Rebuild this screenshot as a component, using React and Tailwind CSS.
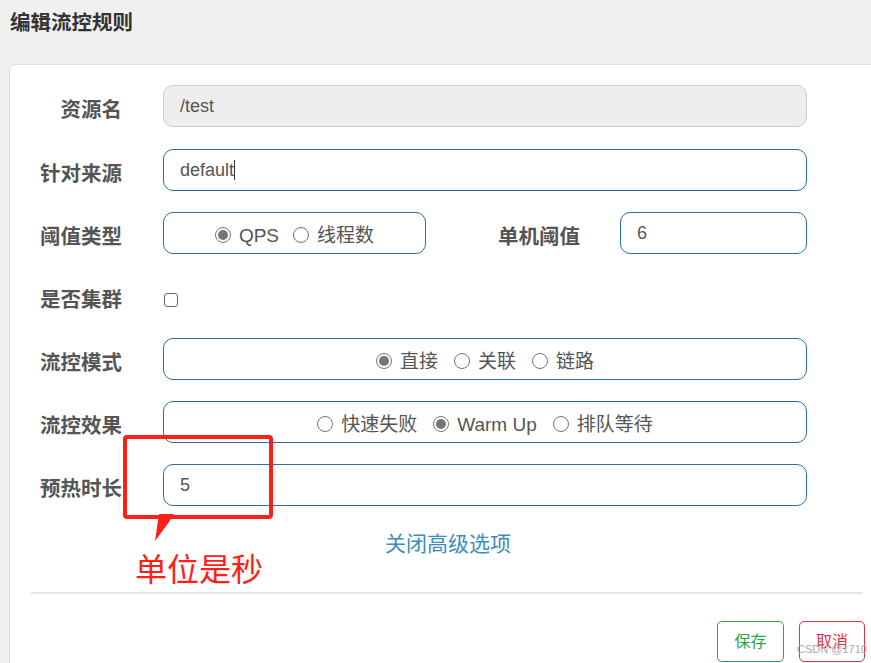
import React from 'react';

const font = { fontFamily: '"Liberation Sans", "Noto Sans CJK SC", sans-serif' };

const Radio = ({ checked, label }) => (
  <span className="flex items-center">
    <span className="w-[16px] h-[16px] rounded-full border-[1.5px] border-[#767676] flex items-center justify-center mr-[8px] mt-[3px]">
      {checked && <span className="w-[10px] h-[10px] rounded-full bg-[#767676]" />}
    </span>
    <span className="pt-[6px]">{label}</span>
  </span>
);

const Label = ({ children, className = 'w-[112px]' }) => (
  <div className={`${className} pt-[8px] text-right text-[20.5px] font-bold text-[#555] shrink-0`}>{children}</div>
);

const App = () => {
  return (
    <div className="relative w-[871px] h-[663px] overflow-hidden bg-[#f0f0f0]" style={font}>
      <div className="h-[64px] pl-[10px] pt-[8px] text-[20.5px] font-bold text-[#333]">编辑流控规则</div>

      <div className="ml-[9px] w-[900px] h-[620px] bg-white border border-[#ddd] rounded-tl-[6px]">
        <div className="pt-[20px]">
          <div className="flex items-center h-[42px] mb-[22px]">
            <Label>资源名</Label>
            <div className="ml-[41px] w-[644px] h-[42px] bg-[#eee] border border-[#ccc] rounded-[10px] flex items-center px-[16px] text-[18px] text-[#555]">
              /test
            </div>
          </div>

          <div className="flex items-center h-[42px] mb-[21px]">
            <Label>针对来源</Label>
            <div className="ml-[41px] w-[644px] h-[42px] border border-[#2e6da4] rounded-[10px] flex items-center px-[16px] text-[18px] text-[#555]">
              default<span className="w-px h-[20px] bg-[#333]" />
            </div>
          </div>

          <div className="flex items-center h-[42px] mb-[21px]">
            <Label>阈值类型</Label>
            <div className="ml-[41px] w-[263px] h-[42px] border border-[#2e6da4] rounded-[10px] flex items-center justify-center gap-[14px] text-[19px] text-[#555]">
              <Radio checked label="QPS" />
              <Radio label="线程数" />
            </div>
            <Label className="w-[154px]">单机阈值</Label>
            <div className="ml-[40px] w-[187px] h-[42px] border border-[#2e6da4] rounded-[10px] flex items-center px-[16px] text-[18px] text-[#555]">
              6
            </div>
          </div>

          <div className="flex items-center h-[42px] mb-[21px]">
            <Label>是否集群</Label>
            <div className="ml-[42px] mt-[8px] w-[14px] h-[14px] border-[1.5px] border-[#666] rounded-[3px]" />
          </div>

          <div className="flex items-center h-[42px] mb-[21px]">
            <Label>流控模式</Label>
            <div className="ml-[41px] w-[644px] h-[42px] border border-[#2e6da4] rounded-[10px] flex items-center justify-center gap-[16px] text-[19px] text-[#555]">
              <Radio checked label="直接" />
              <Radio label="关联" />
              <Radio label="链路" />
            </div>
          </div>

          <div className="flex items-center h-[42px] mb-[21px]">
            <Label>流控效果</Label>
            <div className="ml-[41px] w-[644px] h-[42px] border border-[#2e6da4] rounded-[10px] flex items-center justify-center gap-[16px] text-[19px] text-[#555]">
              <Radio label="快速失败" />
              <Radio checked label="Warm Up" />
              <Radio label="排队等待" />
            </div>
          </div>

          <div className="flex items-center h-[42px] mb-[21px]">
            <Label>预热时长</Label>
            <div className="ml-[41px] w-[644px] h-[42px] border border-[#2e6da4] rounded-[10px] flex items-center px-[16px] text-[18px] text-[#555]">
              5
            </div>
          </div>

          <div className="pl-[375px] h-[34px] leading-[34px] text-[21px] text-[#3c8dbc]">关闭高级选项</div>

          <div className="mt-[31px] ml-[21px] w-[832px] border-t-2 border-[#e5e5e5]" />

          <div className="flex mt-[27px] pl-[707px] gap-[15px]">
            <button className="w-[67px] h-[41px] border border-[#28a745] rounded-[5px] text-[16px] text-[#28a745] bg-white">保存</button>
            <button className="w-[66px] h-[41px] border border-[#dc3545] rounded-[5px] text-[16px] text-[#dc3545] bg-white">取消</button>
          </div>
        </div>
      </div>

      {/* annotation */}
      <div className="absolute left-[123px] top-[435px] w-[150px] h-[84px] border-[4px] border-[#ff2015] rounded-[4px]" />
      <svg className="absolute left-[150px] top-[508px]" width="30" height="36" viewBox="0 0 30 36">
        <polygon points="9,6 24,6 19,14 5,33" fill="#ff2015" />
      </svg>
      <div className="absolute left-[135px] top-[550px] text-[32px] text-[#ff2015] leading-[40px]">单位是秒</div>

      <div className="absolute left-[797px] top-[641px] text-[11px] text-[#aaa]">CSDN @1710</div>
    </div>
  );
};

export default App;
